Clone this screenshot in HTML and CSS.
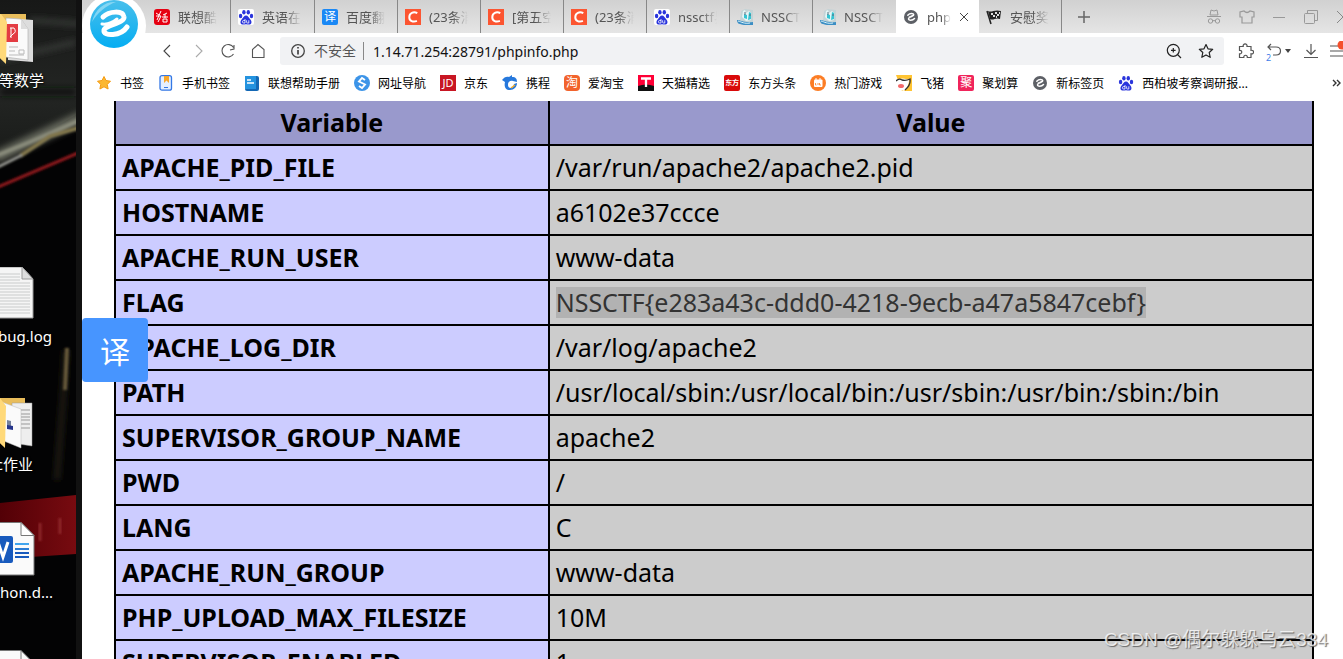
FILE: index.html
```html
<!DOCTYPE html>
<html lang="zh-CN">
<head>
<meta charset="utf-8">
<title>phpinfo()</title>
<link rel="stylesheet" href="styles.css">
</head>
<body>
<svg class="defs" aria-hidden="true">
  <symbol id="baidu" viewBox="0 0 16 16"><g fill="#2a35dc"><ellipse cx="2.600" cy="7" rx="1.700" ry="2.200"/><ellipse cx="5.900" cy="3.200" rx="1.700" ry="2.300"/><ellipse cx="10.300" cy="3.200" rx="1.700" ry="2.300"/><ellipse cx="13.500" cy="7" rx="1.700" ry="2.200"/><path d="M8 6.600c2 0 2.600 2 4 3.300 1.800 1.700 2.300 5-.4 5.600-1.300.2-2.300-.3-3.600-.3s-2.300.5-3.600.3c-2.700-.6-2.200-3.900-.4-5.600C5.400 8.600 6 6.600 8 6.600z"/></g><path d="M7 10v4H5.700a1.100 1.100 0 0 1 0-2.500H7M8.600 11.300v1.900q0 .8.800.8h1.400v-2.700" fill="none" stroke="#fff" stroke-width=".8"/></symbol>
  <symbol id="csdn" viewBox="0 0 16 16"><path fill="#fc5531" d="M0 0h16v16H0z"/><path d="M12.300 4.200C8.500 2.200 4.300 4 4.300 8.200c0 4 3.800 5.200 7.600 3.700" fill="none" stroke="#fff" stroke-width="2"/></symbol>
  <symbol id="ecirc" viewBox="0 0 16 16"><circle cx="8" cy="8" r="7" fill="#5d6066"/><path d="M4.800 6.300C7 3.800 10.500 4.300 10.800 5.800c.2 1.600-5.300 2-5.300 4 0 2 4 1.900 6-.3" fill="none" stroke="#fff" stroke-width="1.500" stroke-linecap="round"/><path d="M5.500 8.200l4.800-2" stroke="#fff" stroke-width="1"/></symbol>
  <symbol id="whale" viewBox="0 0 16 16"><path d="M4 2l4-2 8 1v15H9L3 12z" fill="#c4d3d6"/><path d="M6 2l2-1 1 3 3-2 2 2v7l-5 1-4-4z" fill="#e5f5f5"/><path d="M7 5l3 1v4l-3-1zM12 3l2 1v6l-3 1z" fill="#35c4d2"/><path d="M0 11c4 0 6 3 16 2v3H7c-2 0-3-1-4-1-2 0-3-2-3-4z" fill="#3b8ec4"/><path d="M1 12c4 1 6 3 12 2" stroke="#d8f2fa" fill="none"/><path d="M8 3v3M13 5v2" stroke="#596e80"/></symbol>
</svg>

<div class="screen">
  <aside class="desktop" aria-label="桌面">
    <svg class="wallpaper" viewBox="0 0 76 659" preserveAspectRatio="none" aria-hidden="true">
      <defs>
        <filter id="soft"><feGaussianBlur stdDeviation="3"/></filter>
        <filter id="fine"><feGaussianBlur stdDeviation="1"/></filter>
        <linearGradient id="top" x1="0" y1="0" x2="0" y2="1"><stop offset="0" stop-color="#171817"/><stop offset=".6" stop-color="#232523"/><stop offset="1" stop-color="#191b19"/></linearGradient>
        <linearGradient id="red" x1="0" y1="0" x2="1" y2="0"><stop offset="0" stop-color="#530006"/><stop offset="1" stop-color="#770b10"/></linearGradient>
      </defs>
      <path d="M0 0h76v659H0z" fill="#030304"/>
      <path d="M0 0h76v115L0 158z" fill="url(#top)"/>
      <g filter="url(#soft)"><path d="M30 20l50 4M0 60l76-18" stroke="#373a37" stroke-width="5"/><path d="M0 92h76" stroke="#101211" stroke-width="7"/><path d="M-5 158L82 117" stroke="#66695d" stroke-width="12"/><path d="M66 350l-3 50-6 80" stroke="#2c261b" stroke-width="4" fill="none"/></g>
      <g filter="url(#fine)"><path d="M-2 155L30 142 80 120" stroke="#888a7a" stroke-width="4" fill="none"/><path d="M20 156L50 136 78 128" stroke="#81764c" stroke-width="4" fill="none"/><path d="M-2 167L22 155" stroke="#91928c" stroke-width="3"/><path d="M-2 187L78 153" stroke="#8a171b" stroke-width="3.500"/><path d="M67 348l-2 42" stroke="#66593a" stroke-width="4"/></g>
      <path d="M0 503l76-8v59l-76 5z" fill="url(#red)"/>
      <path d="M40 523v18M60 518v16" stroke="#8d2529" stroke-width="3" filter="url(#fine)"/>
    </svg>
    <div class="item item-math">
      <svg width="52" height="52" viewBox="0 0 52 52"><path d="M0 1h44v14H0z" fill="#e9bd5b"/><path d="M26 5l25 2v42l-25-2z" fill="#ddd"/><path d="M24 5l15 1 7 10v31l-23-3z" fill="#fafafa" stroke="#aaa" stroke-width=".6"/><path d="M39 6v10h7" fill="#ddd"/><path d="M24 11h12v18H23z" fill="#e33c43"/><path d="M28 15h4q3 4-1 6l-3 3M29 15v10" stroke="#fff" fill="none"/><path d="M27 34h9M27 38h6M27 42h15M37 37h5v4h-5z" stroke="#bbb" fill="none"/><path d="M0 1h19l6 8-1 42L0 28z" fill="#ffd979"/></svg>
      <span class="label">高等数学</span>
    </div>
    <div class="item item-log">
      <svg width="52" height="52" viewBox="0 0 52 52"><path d="M0 0h40l11 12v39H0z" fill="#f5f5f5" stroke="#999"/><path d="M0 7h38M0 10h38M0 13h38M0 16h48M0 19h48M0 22h48M0 25h48M0 28h48M0 31h48M0 34h48M0 37h48M0 40h48M0 43h48M0 46h48" stroke="#c9cbcb"/><path d="M40 0v12h11z" fill="#ddd" stroke="#999"/></svg>
      <span class="label">debug.log</span>
    </div>
    <div class="item item-work">
      <svg width="52" height="52" viewBox="0 0 52 52"><path d="M0 1h44v14H0z" fill="#e9bd5b"/><path d="M31 6h20v43l-20-3z" fill="#eee" stroke="#999" stroke-width=".5"/><path d="M40 13h9M40 17h9M40 20h9M40 23h9M40 27h9M40 31h9" stroke="#999"/><path d="M18 4l22 8v39l-22-9z" fill="#fafafa" stroke="#bbb" stroke-width=".5"/><path d="M26 23l4 1v7l-4-1z" fill="#75809b"/><path d="M26 28l6 1v4l-6-1z" fill="#27368c"/><path d="M0 1h19l6 8-1 42L0 28z" fill="#ffd979"/></svg>
      <span class="label">c作业</span>
    </div>
    <div class="item item-python">
      <svg width="52" height="54" viewBox="0 0 52 54"><path d="M0 .5h38l13 13V53H0z" fill="#fafafa" stroke="#777"/><path d="M38 .5v13h13z" fill="#fff" stroke="#777"/><rect y="14" width="30" height="27" rx="2" fill="#185abd"/><path d="M8 20l4 15 4-12 4 12 5-15" fill="none" stroke="#fff" stroke-width="3"/><path d="M32 22h14" stroke="#41a5ee" stroke-width="2"/><path d="M32 27h14" stroke="#2b7cd3" stroke-width="2"/><path d="M32 31h14M32 35h14" stroke="#185abd" stroke-width="2"/></svg>
      <span class="label">python.d...</span>
    </div>
    <div class="item item-last"><svg width="52" height="54" viewBox="0 0 52 54"><path d="M0 .5h38l13 13V53H0z" fill="#fafafa" stroke="#777"/><path d="M38 .5v13h13" fill="none" stroke="#777"/></svg></div>
  </aside>

  <main class="browser">
    <header class="chrome">
      <nav class="tabs" aria-label="标签页">
        <button class="tab wide"><svg class="ico" viewBox="0 0 16 16"><rect width="16" height="16" rx="3" fill="#e60012"/><path d="M2 4l3 2M7 2L3 11M2 7h5M7 7l-3 6M9 6l4-2M8 8h6M11 5v4M9 10h4v3H9z" fill="none" stroke="#fff"/></svg><span class="name">联想酷库</span></button>
        <button class="tab wide"><svg class="ico plate"><use href="#baidu"/></svg><span class="name">英语在线</span></button>
        <button class="tab"><span class="ico badge blue">译</span><span class="name">百度翻译</span></button>
        <button class="tab"><svg class="ico"><use href="#csdn"/></svg><span class="name">(23条消息</span></button>
        <button class="tab"><svg class="ico"><use href="#csdn"/></svg><span class="name">[第五空间</span></button>
        <button class="tab"><svg class="ico"><use href="#csdn"/></svg><span class="name">(23条消息</span></button>
        <button class="tab"><svg class="ico plate"><use href="#baidu"/></svg><span class="name">nssctf界</span></button>
        <button class="tab"><svg class="ico"><use href="#whale"/></svg><span class="name">NSSCTF</span></button>
        <button class="tab last-idle"><svg class="ico"><use href="#whale"/></svg><span class="name">NSSCTF</span></button>
        <button class="tab active"><svg class="ico"><use href="#ecirc"/></svg><span class="name short">php</span><svg class="close" viewBox="0 0 10 10"><path d="M1 1l8 8M9 1L1 9" stroke="#444" fill="none"/></svg></button>
        <button class="tab"><svg class="ico" viewBox="0 0 16 16"><path d="M1 2l4 13" stroke="#222" stroke-width="1.500"/><path d="M2 2c4 2 6-2 13 0l-1 8c-5-2-6 2-10 0z" fill="#222"/><path d="M5 4h2v2H5zM9 3h2v2H9zM7 6h2v2H7zM11 5h2v2h-2zM10 7h1v2h-1zM13 3h1v2h-1z" fill="#ddd"/></svg><span class="name">安慰奖</span></button>
        <button class="add" aria-label="新建标签页"><svg width="12" height="12" viewBox="0 0 12 12"><path d="M6 0v12M0 6h12" stroke="#666" stroke-width="1.500"/></svg></button>
        <div class="window-tools">
          <button aria-label="无痕"><svg width="16" height="16" viewBox="0 0 16 16" fill="none" stroke="#999"><path d="M4 6l1-5 3 1 3-1 1 5zM1 7.500h14M6.500 12q1.500-1 3 0"/><circle cx="4.500" cy="12" r="2.200"/><circle cx="11.500" cy="12" r="2.200"/></svg></button>
          <button aria-label="皮肤"><svg width="16" height="16" viewBox="0 0 16 16" fill="none" stroke="#999" stroke-width="1.200"><path d="M5 2q3 3 6 0l4 1v5h-2v6H3V8H1V3z"/></svg></button>
          <button aria-label="最小化"><svg width="14" height="16" viewBox="0 0 14 16"><path d="M1 8.500h12" stroke="#999"/></svg></button>
          <button aria-label="还原"><svg width="16" height="16" viewBox="0 0 16 16" fill="none" stroke="#999"><rect x="1.500" y="4.500" width="10" height="10" rx="1"/><path d="M4.500 4.500v-3h10v10h-3"/></svg></button>
          <button aria-label="关闭"><svg width="14" height="16" viewBox="0 0 14 16"><path d="M1 2l12 12M13 2L1 14" stroke="#888"/></svg></button>
        </div>
      </nav>

      <div class="toolbar">
        <div class="history">
          <button aria-label="后退"><svg width="16" height="16" viewBox="0 0 16 16"><path d="M10 2L4 8l6 6" fill="none" stroke="#444" stroke-width="1.100"/></svg></button>
          <button aria-label="前进"><svg width="16" height="16" viewBox="0 0 16 16"><path d="M6 2l6 6-6 6" fill="none" stroke="#aaa" stroke-width="1.100"/></svg></button>
          <button aria-label="刷新"><svg width="16" height="16" viewBox="0 0 16 16"><path d="M13.500 4.500A6.200 6.200 0 1 0 13.500 11M14 2v4l-4 1" fill="none" stroke="#555" stroke-width="1.100"/></svg></button>
          <button aria-label="主页"><svg width="16" height="16" viewBox="0 0 16 16"><path d="M2.500 14.500V6.500L8 1.500l6 5v8z" fill="none" stroke="#555" stroke-width="1.100"/></svg></button>
        </div>
        <div class="address">
          <svg width="16" height="16" viewBox="0 0 16 16" fill="none" stroke="#444" stroke-width="1.300"><circle cx="8" cy="8" r="6.300"/><path d="M8 7v4.500M8 4v1.600" stroke-width="1.700"/></svg>
          <label class="risk" for="url">不安全</label>
          <input id="url" class="url" value="1.14.71.254:28791/phpinfo.php">
          <button aria-label="缩放"><svg width="16" height="16" viewBox="0 0 16 16" fill="none" stroke="#222" stroke-width="1.200"><circle cx="7.300" cy="7.300" r="6"/><path d="M11.500 11.500L15 15M7.300 5v4.600M5 7.300h4.600"/></svg></button>
          <button aria-label="收藏"><svg width="16" height="16" viewBox="0 0 16 16" fill="none" stroke="#222" stroke-width="1.200" stroke-linejoin="round"><path d="M8 1.500l2 4.300 4.700.5-3.500 3.200 1 4.800L8 11.900l-4.200 2.400 1-4.800L1.300 6.300 6 5.800z"/></svg></button>
        </div>
        <div class="tools">
          <button aria-label="扩展"><svg width="16" height="16" viewBox="0 0 16 16" fill="none" stroke="#555" stroke-width="1.200"><path d="M1.500 3.500h3.700c-.8-3.500 4.600-3.500 3.800 0h4v3.800c3.500-.6 3.500 4.100 0 3.500v3.700H9.300c.5-3-4-3-3.500 0H1.500v-3.700c3 .3 3-3.800 0-3.500z"/></svg></button>
          <button class="undo" aria-label="恢复"><svg width="26" height="18" viewBox="0 0 26 18"><path d="M5 2L2 5l3 3M2 5h8c6 0 6 8 0 8H7" fill="none" stroke="#555" stroke-width="1.200"/><path d="M19 7h6l-3 4z" fill="#444"/></svg><span class="count">2</span></button>
          <button aria-label="下载"><svg width="14" height="16" viewBox="0 0 14 16"><path d="M7 1v10M2.500 7L7 11.500 11.500 7M0 14.500h14" fill="none" stroke="#555" stroke-width="1.200"/></svg></button>
          <button class="menu" aria-label="菜单"><svg width="18" height="20" viewBox="0 0 18 20"><path d="M0 5h15M0 10h15M0 15h15" stroke="#555" stroke-width="1.200"/><circle cx="12" cy="4" r="4.500" fill="#f4502c"/></svg></button>
        </div>
      </div>

      <nav class="bookmarks" aria-label="书签">
        <a href="#"><svg class="ico" viewBox="0 0 16 16"><path d="M8 1.500l2 4 4.500.7-3.200 3.200.8 4.600-4.100-2.200L3.900 14l.8-4.600L1.500 6.200 6 5.500z" fill="#fbb731" stroke="#f59c13" stroke-linejoin="round"/></svg>书签</a>
        <a href="#"><svg class="ico" viewBox="0 0 16 16"><rect x="2" y=".7" width="11.500" height="14.500" rx="2" fill="#e5f0ff" stroke="#3478e5" stroke-width="1.300"/><path d="M6 1h5v7L8.500 5.500 6 8z" fill="#f9a72a"/><path d="M6 12.500h4" stroke="#3478e5"/></svg>手机书签</a>
        <a href="#"><svg class="ico" viewBox="0 0 16 16"><rect x="1" y="1" width="14" height="15" rx="2" fill="#1468b5"/><path d="M1 1h11v13H1z" fill="#2493df"/><path d="M3 5h4M3 8h7" stroke="#fff" stroke-width="1.300"/></svg>联想帮助手册</a>
        <a href="#"><svg class="ico" viewBox="0 0 16 16"><circle cx="8" cy="8" r="8" fill="#3c94e8"/><path d="M11 5L8 3 5 6.500l6 3L8 13l-3-2" fill="none" stroke="#fff" stroke-width="1.900"/></svg>网址导航</a>
        <a href="#"><span class="ico badge jd">JD</span>京东</a>
        <a href="#"><svg class="ico" viewBox="0 0 16 16"><path d="M0 5c2-3 5-4 7-3l3-2v2c4 0 5 2 5 5l-4-1c-3-1-5 1-5 4 0 3 3 4 5 2l1-3 3-1c0 4-3 7-7 7-5 0-6-4-5-8z" fill="#2678dc"/><path d="M9 13l4-3" stroke="#f7ae28" stroke-width="1.500"/></svg>携程</a>
        <a href="#"><span class="ico badge tao">淘</span>爱淘宝</a>
        <a href="#"><svg class="ico" viewBox="0 0 16 16"><path d="M0 0h16v12H0z" fill="#ff0036"/><path d="M0 11q8-3 16 0v5H0z" fill="#111"/><path d="M3 3.500h10M8 3v9" stroke="#fff" stroke-width="2.300"/></svg>天猫精选</a>
        <a href="#"><span class="ico badge east">东方</span>东方头条</a>
        <a href="#"><svg class="ico" viewBox="0 0 16 16"><circle cx="8" cy="8" r="8" fill="#fc7d24"/><rect x="4" y="4.500" width="8.500" height="7.500" rx="1" fill="#fff"/><path d="M6 3v3M10 3v3" stroke="#fff"/><path d="M5.500 8v2h1M8 8v2M9.500 8v2h1.500" stroke="#fc7d24" fill="none" stroke-width=".8"/></svg>热门游戏</a>
        <a href="#"><svg class="ico" viewBox="0 0 16 16"><path d="M0 0h16v16H6z" fill="#ffc433"/><path d="M0 5q7-3 13 0 0 6-5 11-8-2-8-11z" fill="#fff"/><path d="M0 6q3-3 6-1 4 1 8-1 1 6-5 11" fill="none" stroke="#333" stroke-width="1.300"/><ellipse cx="5" cy="11" rx="3" ry="2" fill="#f56a6a"/></svg>飞猪</a>
        <a href="#"><span class="ico badge ju">聚</span>聚划算</a>
        <a href="#"><svg class="ico"><use href="#ecirc"/></svg>新标签页</a>
        <a href="#"><svg class="ico"><use href="#baidu"/></svg>西柏坡考察调研报...</a>
        <button class="more" aria-label="更多书签"><svg width="10" height="8" viewBox="0 0 10 8"><path d="M1 1l3 3-3 3M5 1l3 3-3 3" fill="none" stroke="#333" stroke-width="1.400"/></svg></button>
      </nav>
      <svg class="logo" viewBox="0 0 64 64" aria-hidden="true">
        <defs><linearGradient id="lg" x1="0" y1="0" x2="0" y2="1"><stop offset="0" stop-color="#49bfeb"/><stop offset="1" stop-color="#05adf2"/></linearGradient></defs>
        <circle cx="32" cy="26" r="32" fill="#fff"/><circle cx="32" cy="24" r="24" fill="url(#lg)"/>
        <path d="M10 22C13 8 24 1 34 2 25 5 15 13 10 22z" fill="#a9e4f7" opacity=".65"/>
        <path d="M21 17c6-6 20-7 21 0 1 6-19 8-20 13-1 7 17 6 23-3" fill="none" stroke="#fff" stroke-width="5" stroke-linecap="round"/><path d="M20 24q8 1 15-5" fill="none" stroke="#fff" stroke-width="3" stroke-linecap="round"/>
      </svg>
    </header>

    <section class="page">
      <table class="env">
        <thead><tr><th class="key">Variable</th><th>Value</th></tr></thead>
        <tbody>
          <tr><th scope="row">APACHE_PID_FILE</th><td>/var/run/apache2/apache2.pid</td></tr>
          <tr><th scope="row">HOSTNAME</th><td>a6102e37ccce</td></tr>
          <tr><th scope="row">APACHE_RUN_USER</th><td>www-data</td></tr>
          <tr><th scope="row">FLAG</th><td><mark>NSSCTF{e283a43c-ddd0-4218-9ecb-a47a5847cebf}</mark></td></tr>
          <tr><th scope="row">APACHE_LOG_DIR</th><td>/var/log/apache2</td></tr>
          <tr><th scope="row">PATH</th><td>/usr/local/sbin:/usr/local/bin:/usr/sbin:/usr/bin:/sbin:/bin</td></tr>
          <tr><th scope="row">SUPERVISOR_GROUP_NAME</th><td>apache2</td></tr>
          <tr><th scope="row">PWD</th><td>/</td></tr>
          <tr><th scope="row">LANG</th><td>C</td></tr>
          <tr><th scope="row">APACHE_RUN_GROUP</th><td>www-data</td></tr>
          <tr><th scope="row">PHP_UPLOAD_MAX_FILESIZE</th><td>10M</td></tr>
          <tr><th scope="row">SUPERVISOR_ENABLED</th><td>1</td></tr>
        </tbody>
      </table>
    </section>
    <button class="translate">译</button>
  </main>
  <div class="watermark">CSDN @偶尔躲躲乌云334</div>
</div>
</body>
</html>
```
FILE: styles.css
```css
* { box-sizing: border-box; }
body { margin: 0; font-family: "Noto Sans", "Noto Sans CJK SC", sans-serif; color: #000; background: #fff; }
button { border: 0; padding: 0; background: none; color: inherit; font: inherit; display: flex; align-items: center; justify-content: center; }
svg { display: block; flex: none; }
.defs { position: absolute; width: 0; height: 0; }
.screen { position: relative; display: grid; grid-template-columns: 82px minmax(0, 1fr); height: 100vh; overflow: hidden; }

.desktop { position: relative; background: #111; overflow: hidden; }
.wallpaper { width: 76px; height: 100%; }
.item { position: absolute; display: flex; flex-direction: column; align-items: flex-end; }
.label { color: #fff; font-size: 15px; line-height: 20px; white-space: nowrap; text-shadow: 1px 1px 2px #000; }
.item-math { top: 13px; right: 38px; }
.item-math svg { margin-right: 10px; }
.item-math .label { margin-top: 5px; }
.item-log { top: 267px; right: 30px; }
.item-log svg, .item-python svg { margin-right: 18px; }
.item-log .label { margin-top: 7px; }
.item-work { top: 397px; right: 49px; }
.item-work .label { margin-top: 5px; }
.item-python { top: 522px; right: 29px; }
.item-python .label { margin-top: 6px; }
.item-last { top: 650px; right: 47px; }

.browser { position: relative; display: flex; flex-direction: column; min-width: 0; height: 100vh; overflow: hidden; background: #fff; }
.chrome { position: relative; flex: none; }
.logo { position: absolute; left: 0; top: 0; width: 64px; height: 64px; }
.ico { width: 16px; height: 16px; flex: none; }
.plate { background: #fff; border-radius: 2px; }
.badge { display: flex; align-items: center; justify-content: center; color: #fff; border-radius: 2px; font-size: 12px; line-height: 16px; overflow: hidden; }
.blue { background: #1a88f5; }
.jd { background: #c81623; font-size: 11px; border-radius: 0; }
.tao { background: #f2632c; border-radius: 4px; }
.east { background: #d90a0a; font-size: 7px; font-weight: bold; }
.ju { background: #f0245b; }

.tabs { display: flex; height: 33px; padding-left: 65px; background: linear-gradient(#d1d1d1, #e5e5e5); color: #555; }
.tab { width: 83px; flex: none; justify-content: flex-start; gap: 8px; padding-left: 7px; border-right: 1px solid #888; font-size: 13px; }
.wide { width: 84px; }
.last-idle { border-right: 0; }
.name { width: 39px; overflow: hidden; white-space: nowrap; text-align: left; -webkit-mask-image: linear-gradient(90deg, #000 60%, transparent); mask-image: linear-gradient(90deg, #000 60%, transparent); }
.active { background: #fff; border-right: 0; }
.short { width: 24px; }
.close { width: 10px; height: 10px; }
.add { width: 44px; }
.window-tools { display: flex; align-items: center; gap: 17px; margin-left: auto; margin-right: -7px; }

.toolbar { display: flex; align-items: center; height: 36px; }
.history { display: flex; gap: 14px; padding: 0 14px 0 78px; }
.address { flex: 1; min-width: 0; display: flex; align-items: center; height: 28px; padding: 0 10px; background: #f1f2f4; border-radius: 3px; }
.address button { margin-left: 16px; }
.risk { margin: 0 7px 0 8px; font-size: 14px; line-height: 20px; color: #555; }
.url { flex: 1; min-width: 0; height: 18px; border: 0; border-left: 1px solid #888; padding: 0 0 0 9px; background: none; font: inherit; font-size: 14px; color: #111; outline: 0; }
.tools { display: flex; align-items: center; gap: 12px; padding-left: 14px; margin-right: -5px; }
.undo { position: relative; }
.count { position: absolute; left: 0; bottom: -4px; font-size: 9px; line-height: 12px; color: #3f7de8; }

.bookmarks { display: flex; align-items: center; gap: 14px; height: 32px; padding: 0 1px 4px 14px; font-size: 12px; }
.bookmarks a { display: flex; align-items: center; gap: 8px; color: #000; text-decoration: none; white-space: nowrap; }
.more { margin-left: auto; }

.page { flex: 1; min-height: 0; overflow: hidden; padding: 0 29px 0 32px; }
.env { width: 100%; table-layout: fixed; border-collapse: collapse; font-size: 25px; line-height: 33px; }
.env th, .env td { height: 45px; padding: 5px 6px; border: 2px solid #000; white-space: nowrap; }
.env thead th { height: 44px; padding: 5px 6px; background: #99c; text-align: center; border-top: 0; }
.env .key { width: 36.200%; }
.env tbody th { background: #ccf; text-align: left; }
.env td { background: #ccc; }
mark { display: inline-block; line-height: 31px; background: #b2b2b2; color: #333; }

.translate { position: absolute; left: 0; top: 318px; width: 66px; height: 64px; border-radius: 4px; background: #4795ff; color: #fff; font-size: 30px; }
.watermark { position: absolute; right: 15px; bottom: 5px; font-family: "Liberation Sans", "Noto Sans CJK SC", sans-serif; font-size: 19px; line-height: 28px; color: rgba(255, 255, 255, .75); text-shadow: 1px 1px 1px #666; white-space: nowrap; }
```
